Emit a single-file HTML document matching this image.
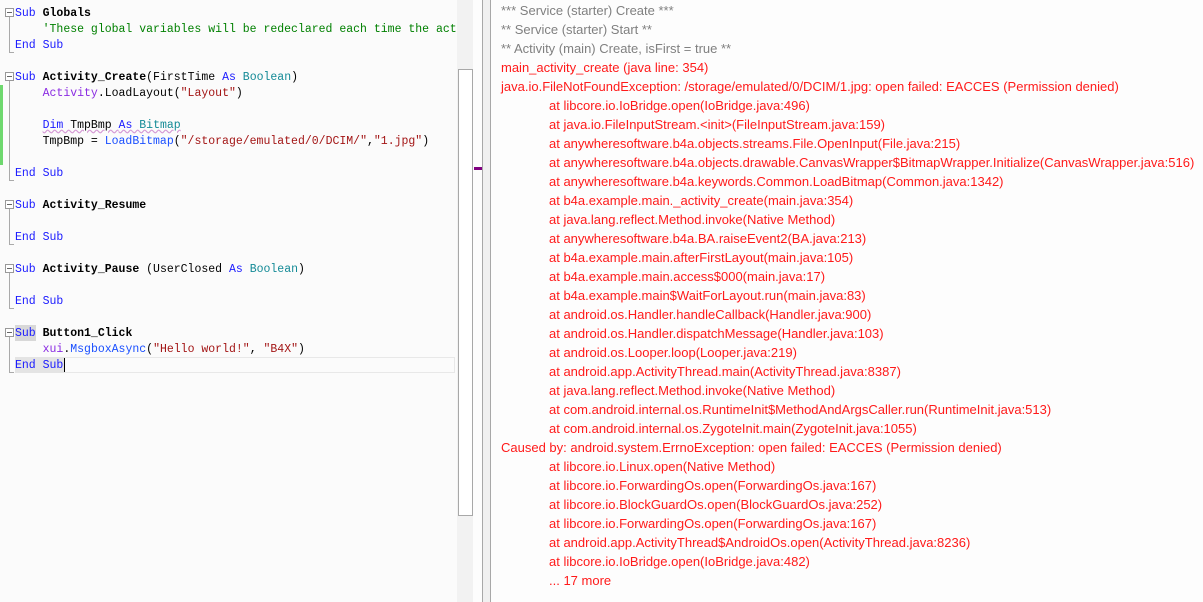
<!DOCTYPE html>
<html><head><meta charset="utf-8"><style>
*{margin:0;padding:0;box-sizing:border-box}
html,body{width:1203px;height:602px;overflow:hidden;background:#fdfdfd;position:relative}
#code{position:absolute;left:0;top:0;width:457px;height:602px;background:#fbfbfb;overflow:hidden}
.cl{position:absolute;left:15px;height:16px;line-height:16px;font-family:"Liberation Mono",monospace;font-size:11.5px;white-space:pre;color:#000}
.k{color:#1a1aff}.b{font-weight:bold}.c{color:#008000}.t{color:#138a96}.s{color:#a31515}.p{color:#8a2be2}.m{color:#1a4fff}
.fold{position:absolute;left:5px;width:9px;height:9px;border:1px solid #999;background:#fff}
.fold:after{content:"";position:absolute;left:1px;top:3px;width:5px;height:1px;background:#666}
.vl{position:absolute;left:9px;width:1px;background:#aaa}
.hl{position:absolute;left:9px;width:5px;height:1px;background:#aaa}
#log{position:absolute;left:501px;top:1px;font-family:"Liberation Sans",sans-serif;font-size:13px}
#log div{height:19px;line-height:19px;color:#ff1a1a;white-space:pre}
#log .g{color:#808080}
#log .i{padding-left:48px}
</style></head><body>
<div id="code">
<div style="position:absolute;left:0;top:85px;width:3px;height:80px;background:#6ed86e"></div>
<div style="position:absolute;left:15px;top:357px;width:440px;height:16px;border:1px solid #e8e8e8"></div>
<div style="position:absolute;left:15px;top:325px;width:21px;height:16px;background:#d8d8d8"></div>
<div style="position:absolute;left:15px;top:357px;width:50px;height:16px;background:#e4e4e4"></div>
<div style="position:absolute;left:64px;top:358px;width:1px;height:14px;background:#000"></div>

<div class="fold" style="top:8px"></div><div class="vl" style="top:17px;height:35px"></div><div class="hl" style="top:52px"></div>
<div class="fold" style="top:72px"></div><div class="vl" style="top:81px;height:99px"></div><div class="hl" style="top:180px"></div>
<div class="fold" style="top:200px"></div><div class="vl" style="top:209px;height:35px"></div><div class="hl" style="top:244px"></div>
<div class="fold" style="top:264px"></div><div class="vl" style="top:273px;height:35px"></div><div class="hl" style="top:308px"></div>
<div class="fold" style="top:328px"></div><div class="vl" style="top:337px;height:35px"></div><div class="hl" style="top:372px"></div>

<div class="cl" style="top:6px"><span class="k">Sub</span> <span class="b">Globals</span></div>
<div class="cl" style="top:22px">    <span class="c">'These global variables will be redeclared each time the activity is created.</span></div>
<div class="cl" style="top:38px"><span class="k">End Sub</span></div>
<div class="cl" style="top:70px"><span class="k">Sub</span> <span class="b">Activity_Create</span>(FirstTime <span class="k">As</span> <span class="t">Boolean</span>)</div>
<div class="cl" style="top:86px">    <span class="p">Activity</span>.LoadLayout(<span class="s">"Layout"</span>)</div>
<div class="cl" style="top:118px">    <span style="text-decoration:underline wavy #d59ad5"><span class="k">Dim</span> TmpBmp <span class="k">As</span> <span class="t">Bitmap</span></span></div>
<div class="cl" style="top:134px">    TmpBmp = <span class="m">LoadBitmap</span>(<span class="s">"/storage/emulated/0/DCIM/"</span>,<span class="s">"1.jpg"</span>)</div>
<div class="cl" style="top:166px"><span class="k">End Sub</span></div>
<div class="cl" style="top:198px"><span class="k">Sub</span> <span class="b">Activity_Resume</span></div>
<div class="cl" style="top:230px"><span class="k">End Sub</span></div>
<div class="cl" style="top:262px"><span class="k">Sub</span> <span class="b">Activity_Pause</span> (UserClosed <span class="k">As</span> <span class="t">Boolean</span>)</div>
<div class="cl" style="top:294px"><span class="k">End Sub</span></div>
<div class="cl" style="top:326px"><span class="k">Sub</span> <span class="b">Button1_Click</span></div>
<div class="cl" style="top:342px">    <span class="p">xui</span>.<span class="m">MsgboxAsync</span>(<span class="s">"Hello world!"</span>, <span class="s">"B4X"</span>)</div>
<div class="cl" style="top:358px"><span class="k">End Sub</span></div>
</div>
<div style="position:absolute;left:457px;top:0;width:16px;height:602px;background:#f2f2f2"></div>
<div style="position:absolute;left:458px;top:69px;width:15px;height:447px;background:#fff;border:1px solid #a8a8a8"></div>
<div style="position:absolute;left:474px;top:167px;width:8px;height:3px;background:#800080"></div>
<div style="position:absolute;left:482px;top:0;width:1px;height:602px;background:#a8a8a8"></div>
<div style="position:absolute;left:483px;top:0;width:7px;height:602px;background:#f0f0f0"></div>
<div style="position:absolute;left:490px;top:0;width:1px;height:602px;background:#a8a8a8"></div>
<div id="log"><div class="g">*** Service (starter) Create ***</div><div class="g">** Service (starter) Start **</div><div class="g">** Activity (main) Create, isFirst = true **</div><div>main_activity_create (java line: 354)</div><div>java.io.FileNotFoundException: /storage/emulated/0/DCIM/1.jpg: open failed: EACCES (Permission denied)</div><div class="i">at libcore.io.IoBridge.open(IoBridge.java:496)</div><div class="i">at java.io.FileInputStream.&lt;init&gt;(FileInputStream.java:159)</div><div class="i">at anywheresoftware.b4a.objects.streams.File.OpenInput(File.java:215)</div><div class="i">at anywheresoftware.b4a.objects.drawable.CanvasWrapper$BitmapWrapper.Initialize(CanvasWrapper.java:516)</div><div class="i">at anywheresoftware.b4a.keywords.Common.LoadBitmap(Common.java:1342)</div><div class="i">at b4a.example.main._activity_create(main.java:354)</div><div class="i">at java.lang.reflect.Method.invoke(Native Method)</div><div class="i">at anywheresoftware.b4a.BA.raiseEvent2(BA.java:213)</div><div class="i">at b4a.example.main.afterFirstLayout(main.java:105)</div><div class="i">at b4a.example.main.access$000(main.java:17)</div><div class="i">at b4a.example.main$WaitForLayout.run(main.java:83)</div><div class="i">at android.os.Handler.handleCallback(Handler.java:900)</div><div class="i">at android.os.Handler.dispatchMessage(Handler.java:103)</div><div class="i">at android.os.Looper.loop(Looper.java:219)</div><div class="i">at android.app.ActivityThread.main(ActivityThread.java:8387)</div><div class="i">at java.lang.reflect.Method.invoke(Native Method)</div><div class="i">at com.android.internal.os.RuntimeInit$MethodAndArgsCaller.run(RuntimeInit.java:513)</div><div class="i">at com.android.internal.os.ZygoteInit.main(ZygoteInit.java:1055)</div><div>Caused by: android.system.ErrnoException: open failed: EACCES (Permission denied)</div><div class="i">at libcore.io.Linux.open(Native Method)</div><div class="i">at libcore.io.ForwardingOs.open(ForwardingOs.java:167)</div><div class="i">at libcore.io.BlockGuardOs.open(BlockGuardOs.java:252)</div><div class="i">at libcore.io.ForwardingOs.open(ForwardingOs.java:167)</div><div class="i">at android.app.ActivityThread$AndroidOs.open(ActivityThread.java:8236)</div><div class="i">at libcore.io.IoBridge.open(IoBridge.java:482)</div><div class="i">... 17 more</div></div>
</body></html>
